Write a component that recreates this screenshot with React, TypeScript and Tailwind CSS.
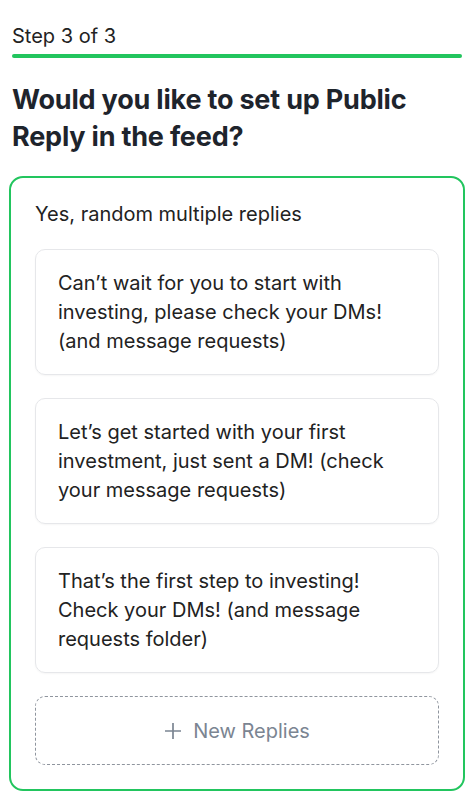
const replies = [
  "Can\u2019t wait for you to start with investing, please check your DMs! (and message requests)",
  "Let\u2019s get started with your first investment, just sent a DM! (check your message requests)",
  "That\u2019s the first step to investing! Check your DMs! (and message requests folder)",
];

export default function App() {
  return (
    <div className="min-h-[801px] bg-white font-['Inter',sans-serif] text-[#1f2328]">
      <div className="px-[12px] pt-[23px]">
        <p className="text-[20px] leading-[26px] text-[#222]">Step 3 of 3</p>
        <div className="mt-[5px] h-[4px] w-full rounded-full bg-[#22c55e]" />
        <h1 className="mt-[23px] text-[27px] font-bold leading-[37px] tracking-[-0.2px] text-[#1e242c]">
          Would you like to set up Public Reply in the feed?
        </h1>
      </div>

      <div className="mx-[9px] mt-[21px] rounded-[14px] border-[2.5px] border-[#22c55e] px-[24px] pb-[24px] pt-[24px]">
        <p className="text-[20px] leading-[24px] text-[#222]">Yes, random multiple replies</p>
        <div className="mt-[23px] flex flex-col gap-[23px]">
          {replies.map((r, i) => (
            <div
              key={i}
              className="rounded-[10px] border border-[#e6e7ea] px-[22px] py-[18.5px] text-[20px] leading-[29px] text-[#222] shadow-[0_1px_2px_rgba(0,0,0,0.04)]"
            >
              {r}
            </div>
          ))}
          <button className="flex h-[69px] items-center justify-center gap-[11px] rounded-[10px] border-[1.5px] border-dashed border-[#8f959e] text-[20px] text-[#7b8592]">
            <svg width="18" height="18" viewBox="0 0 18 18" fill="none" stroke="currentColor" strokeWidth="1.7">
              <path d="M9 1v16M1 9h16" />
            </svg>
            New Replies
          </button>
        </div>
      </div>
    </div>
  );
}
